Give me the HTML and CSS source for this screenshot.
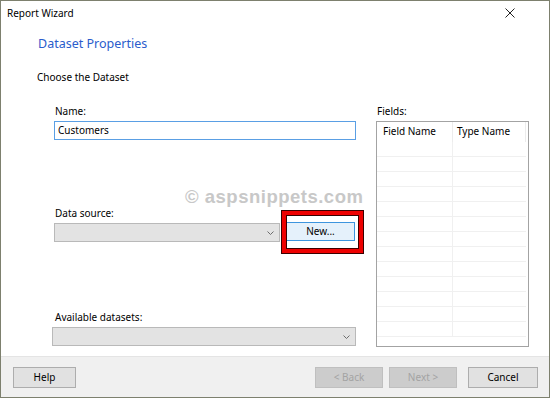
FILE: index.html
```html
<!DOCTYPE html>
<html>
<head>
<meta charset="utf-8">
<link rel="stylesheet" href="styles.css">
</head>
<body>
<div class="dialog">
  <div class="titlebar">
    <span class="title">Report Wizard</span>
    <svg class="close" width="10" height="10" viewBox="0 0 10 10"><path d="M0.5 0.5 L9.5 9.5 M9.5 0.5 L0.5 9.5" stroke="#222" stroke-width="1" fill="none"/></svg>
  </div>
  <div class="content">
    <div class="heading">Dataset Properties</div>
    <div class="subheading">Choose the Dataset</div>
    <div class="columns">
      <div class="left">
        <div class="label">Name:</div>
        <div class="textbox">Customers</div>
        <div class="label ds-label">Data source:</div>
        <div class="ds-row">
          <div class="combo combo-ds"><svg class="chev" width="7" height="4" viewBox="0 0 7 4"><path d="M0.5 0.5 L3.5 3.5 L6.5 0.5" stroke="#6d6d6d" fill="none"/></svg></div>
          <div class="btn-new">New...</div>
        </div>
        <div class="label av-label">Available datasets:</div>
        <div class="combo combo-av"><svg class="chev" width="7" height="4" viewBox="0 0 7 4"><path d="M0.5 0.5 L3.5 3.5 L6.5 0.5" stroke="#6d6d6d" fill="none"/></svg></div>
      </div>
      <div class="right">
        <div class="label">Fields:</div>
        <div class="grid">
          <div class="grid-head">
            <div class="cell c1">Field Name</div>
            <div class="cell c2">Type Name</div>
          </div>
          <div class="rows">
            <div class="row"><div class="cell c1"></div><div class="cell c2"></div></div>
            <div class="row"><div class="cell c1"></div><div class="cell c2"></div></div>
            <div class="row"><div class="cell c1"></div><div class="cell c2"></div></div>
            <div class="row"><div class="cell c1"></div><div class="cell c2"></div></div>
            <div class="row"><div class="cell c1"></div><div class="cell c2"></div></div>
            <div class="row"><div class="cell c1"></div><div class="cell c2"></div></div>
            <div class="row"><div class="cell c1"></div><div class="cell c2"></div></div>
            <div class="row"><div class="cell c1"></div><div class="cell c2"></div></div>
            <div class="row"><div class="cell c1"></div><div class="cell c2"></div></div>
            <div class="row"><div class="cell c1"></div><div class="cell c2"></div></div>
            <div class="row"><div class="cell c1"></div><div class="cell c2"></div></div>
            <div class="row"><div class="cell c1"></div><div class="cell c2"></div></div>
            <div class="row"><div class="cell c1"></div><div class="cell c2"></div></div>
          </div>
        </div>
      </div>
    </div>
    <div class="watermark">© aspsnippets.com</div>
    <div class="highlight"></div>
  </div>
  <div class="footer">
    <div class="btn btn-help">Help</div>
    <div class="spacer"></div>
    <div class="btn btn-disabled">&lt; Back</div>
    <div class="btn btn-disabled btn-next">Next &gt;</div>
    <div class="btn btn-cancel">Cancel</div>
  </div>
</div>
</body>
</html>
```
FILE: styles.css
```css
* { box-sizing: border-box; }
html, body { margin: 0; padding: 0; background: #fff; }
body {
  font-family: "Noto Sans", "Segoe UI", sans-serif;
  font-size: 10px;
  color: #000;
}
.dialog {
  width: 550px;
  height: 398px;
  border: 1px solid #7d806e;
  display: flex;
  flex-direction: column;
  background: #fff;
}
.titlebar {
  height: 23px;
  display: flex;
  align-items: center;
  padding-left: 6px;
  padding-right: 34px;
  justify-content: space-between;
}
.title { font-size: 10px; line-height: 14px; }
.close { display: block; }
.content {
  flex: 1;
  position: relative;
  padding-left: 36px;
}
.heading {
  margin-top: 12px;
  margin-left: 1px;
  font-size: 12.5px;
  line-height: 16px;
  color: #2b5ccc;
}
.subheading {
  margin-top: 18px;
  font-size: 10px;
  line-height: 14px;
}
.columns {
  display: flex;
  gap: 20px;
  margin-top: 20px;
  padding-left: 15px;
}
.left { width: 304px; }
.right { width: 153px; }
.label { font-size: 10px; line-height: 14px; padding-left: 3px; }
.right .label { padding-left: 1px; }
.textbox {
  margin-top: 3px;
  margin-left: 2px;
  width: 302px;
  height: 19px;
  border: 1px solid #5a9fe4;
  padding-left: 3px;
  line-height: 17px;
  font-size: 10px;
}
.ds-label { margin-top: 66px; }
.ds-row {
  margin-top: 2px;
  display: flex;
  align-items: flex-start;
  margin-left: 2px;
  gap: 6px;
}
.combo {
  height: 19px;
  background: #e3e3e3;
  border: 1px solid #b9b9b9;
  display: flex;
  align-items: center;
  justify-content: flex-end;
  padding-right: 5px;
}
.combo-ds { width: 226px; margin-top: 1px; }
.btn-new {
  width: 69px;
  height: 19px;
  background: #e5f1fb;
  border: 1px solid #3d95de;
  text-align: center;
  line-height: 17px;
  font-size: 10px;
}
.av-label { margin-top: 68px; }
.combo-av {
  margin-top: 3px;
  width: 304px;
}
.chev { display: block; }
.grid {
  margin-top: 3px;
  height: 226px;
  border: 1px solid #a3a3a3;
  overflow: hidden;
  padding-right: 2px;
}
.grid-head {
  display: flex;
  height: 20px;
}
.grid-head .cell {
  font-size: 10px;
  line-height: 18px;
  padding-left: 6px;
}
.cell.c1 { width: 76px; border-right: 1px solid #ececec; }
.cell.c2 { flex: 1; padding-left: 4px; }
.grid-head .c2 { border-right: 1px solid #ececec; }
.row {
  display: flex;
  height: 15px;
  border-bottom: 1px solid #f0f0f0;
}
.row .cell.c1 { border-right: 1px solid #f0f0f0; }
.watermark {
  position: absolute;
  left: 184px;
  top: 162px;
  font-family: "Liberation Sans", Arial, sans-serif;
  font-weight: bold;
  font-size: 18.5px;
  color: #c8c8c8;
  letter-spacing: 0.5px;
}
.highlight {
  position: absolute;
  left: 281px;
  top: 187px;
  width: 81px;
  height: 42px;
  border: 4px solid #ee0000;
  box-shadow: 0 0 0 1px #3a0000, inset 0 0 0 1px #3a0000;
}
.footer {
  height: 41px;
  background: #f0f0f0;
  border-top: 1px solid #e4e4e4;
  display: flex;
  align-items: flex-start;
  padding: 10px 11px 0 12px;
}
.spacer { flex: 1; }
.btn {
  height: 21px;
  background: #e1e1e1;
  border: 1px solid #adadad;
  text-align: center;
  line-height: 19px;
  font-size: 10px;
}
.btn-help { width: 63px; }
.btn-disabled {
  width: 68px;
  background: #cccccc;
  border-color: #bfbfbf;
  color: #a3a3a3;
}
.btn-next { margin-left: 6px; }
.btn-cancel { width: 70px; margin-left: 11px; }
```
